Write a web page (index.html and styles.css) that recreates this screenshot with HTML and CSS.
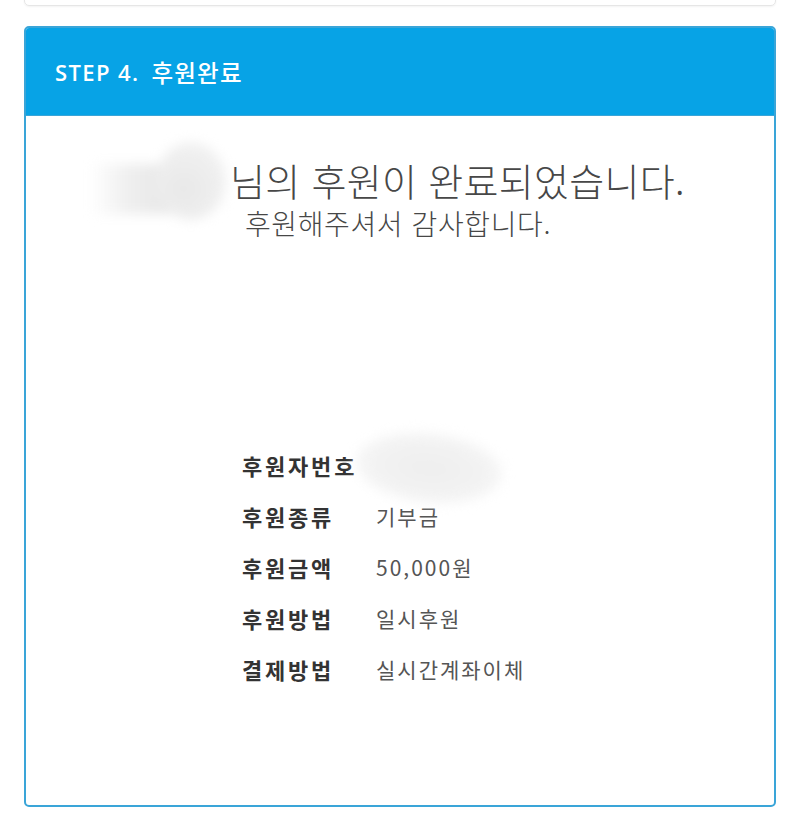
FILE: index.html
```html
<!DOCTYPE html>
<html lang="ko">
<head>
<meta charset="utf-8">
<link rel="stylesheet" href="styles.css">
</head>
<body>
<div class="prev-card"></div>
<section class="panel">
  <header class="panel-head"><span class="head-en">STEP 4.</span><span class="head-ko">후원완료</span></header>
  <div class="panel-body">
    <div class="msg">
      <div class="msg-line1">
        <span class="blur-name"><span class="blur-band"></span><span class="blur-dot"></span></span>
        <span class="msg-title">님의 후원이 완료되었습니다.</span>
      </div>
      <p class="msg-sub">후원해주셔서 감사합니다.</p>
    </div>
    <dl class="info">
      <div class="row"><dt>후원자번호</dt><dd><span class="blur-num"></span></dd></div>
      <div class="row"><dt>후원종류</dt><dd>기부금</dd></div>
      <div class="row"><dt>후원금액</dt><dd>50,000원</dd></div>
      <div class="row"><dt>후원방법</dt><dd>일시후원</dd></div>
      <div class="row"><dt>결제방법</dt><dd>실시간계좌이체</dd></div>
    </dl>
  </div>
</section>
</body>
</html>
```
FILE: styles.css
```css
* { box-sizing: border-box; }
html, body { margin: 0; padding: 0; background: #fff; }
body {
  width: 800px;
  height: 840px;
  overflow: hidden;
  font-family: "Noto Sans CJK KR", "Noto Sans", sans-serif;
  color: #444;
}
.prev-card {
  margin: -20px 24px 0;
  height: 26px;
  border: 1px solid #e6e6e6;
  border-radius: 0 0 5px 5px;
  box-shadow: 0 1px 2px rgba(0,0,0,0.05);
}
.panel {
  margin: 20px 24px 0;
  height: 781px;
  border: 2px solid #3aa5d8;
  border-radius: 5px;
  overflow: hidden;
  display: flex;
  flex-direction: column;
}
.panel-head {
  background: #07a3e6;
  color: #fff;
  height: 88px;
  padding: 0 0 0 29px;
  display: flex;
  align-items: center;
  gap: 12px;
  border-bottom: 1px solid #3aa5d8;
}
.head-en {
  font-family: "Open Sans", sans-serif;
  font-size: 22px;
  font-weight: 600;
  letter-spacing: 1.4px;
}
.head-ko {
  font-family: "Noto Sans CJK KR", sans-serif;
  font-size: 23.5px;
  font-weight: 500;
  letter-spacing: 1.2px;
}
.panel-body {
  flex: 1;
  padding: 42px 0 0;
}
.msg {
  padding-left: 60px;
}
.msg-line1 {
  display: flex;
  align-items: center;
  height: 44px;
}
.blur-name {
  position: relative;
  display: block;
  flex: none;
  width: 140px;
  height: 84px;
  margin-right: 4px;
  filter: blur(6px);
}
.blur-band {
  position: absolute;
  left: 4px;
  top: 26px;
  width: 108px;
  height: 50px;
  background: linear-gradient(to right, #fff 0%, #efefef 35%, #e6e6e6 75%, #eaeaea 100%);
}
.blur-dot {
  position: absolute;
  left: 70px;
  top: 4px;
  width: 70px;
  height: 78px;
  border-radius: 50%;
  background: radial-gradient(circle at 40% 60%, #e8e8e8 0%, #efefef 55%, #f5f5f5 100%);
}
.msg-title {
  font-size: 38px;
  font-weight: 300;
  color: #474747;
  line-height: 1;
  letter-spacing: 0.3px;
}
.msg-sub {
  margin: 7px 0 0 159px;
  font-size: 28px;
  font-weight: 300;
  color: #474747;
  line-height: 1;
  letter-spacing: 0.6px;
}
.info {
  margin: 203px 0 0 216px;
  padding: 0;
}
.row {
  display: flex;
  align-items: center;
  height: 50.8px;
}
.row dt {
  width: 134px;
  font-size: 22px;
  font-weight: 700;
  color: #333;
  letter-spacing: 2.8px;
}
.row dd {
  margin: 0;
  font-size: 21px;
  font-weight: 400;
  color: #555;
  letter-spacing: 2px;
}
.blur-num {
  display: block;
  width: 146px;
  height: 70px;
  margin-left: -20px;
  margin-top: 6px;
  background: radial-gradient(ellipse at 50% 50%, #eeeeee 0%, #f2f2f2 50%, #f8f8f8 80%, #fff 100%);
  filter: blur(6px);
  border-radius: 50%;
  transform: rotate(6deg);
}
```
